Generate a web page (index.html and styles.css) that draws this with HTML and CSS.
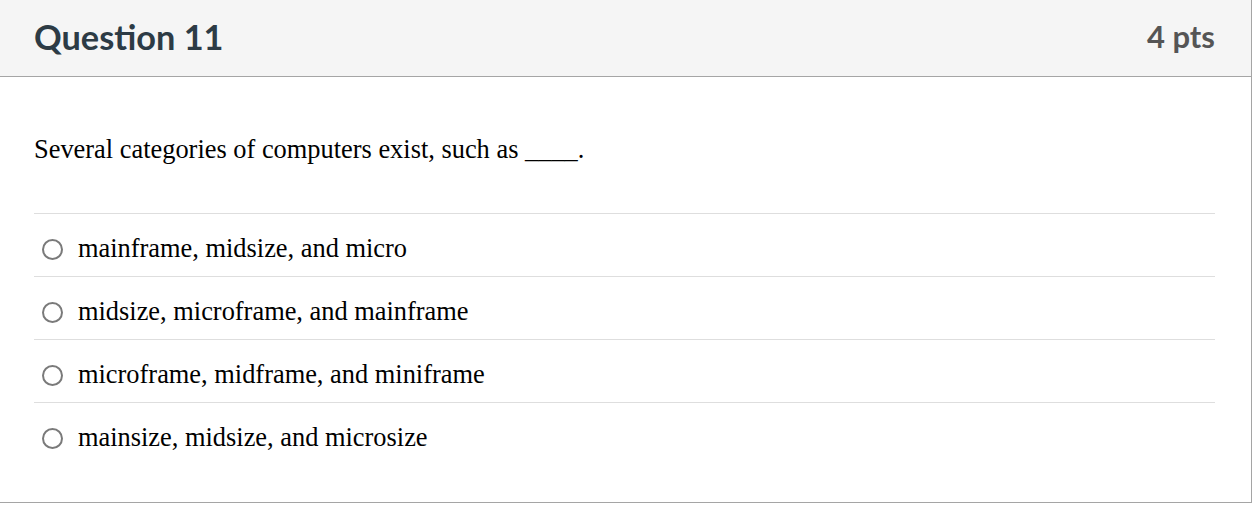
FILE: index.html
```html
<!DOCTYPE html>
<html>
<head>
<meta charset="utf-8">
<link rel="stylesheet" href="styles.css">
</head>
<body>
<div class="card">
  <div class="header">
    <h2 class="title">Question 11</h2>
    <span class="pts">4 pts</span>
  </div>
  <div class="body">
    <p class="question">Several categories of computers exist, such as ____.</p>
    <div class="answers">
      <label class="answer"><span class="radio"></span><span class="atext">mainframe, midsize, and micro</span></label>
      <label class="answer"><span class="radio"></span><span class="atext">midsize, microframe, and mainframe</span></label>
      <label class="answer"><span class="radio"></span><span class="atext">microframe, midframe, and miniframe</span></label>
      <label class="answer"><span class="radio"></span><span class="atext">mainsize, midsize, and microsize</span></label>
    </div>
  </div>
</div>
</body>
</html>
```
FILE: styles.css
```css
html, body { margin: 0; padding: 0; background: #fff; }
.card {
  width: 1251px;
  height: 502px;
  border-right: 1px solid #a5a5a5;
  border-bottom: 1px solid #a5a5a5;
  box-sizing: content-box;
  display: flex;
  flex-direction: column;
}
.header {
  height: 77px;
  flex: none;
  background: #f5f5f5;
  border-bottom: 1px solid #a5a5a5;
  display: flex;
  align-items: center;
  justify-content: space-between;
  padding: 0 36px 4px 34px;
  box-sizing: border-box;
  font-family: Lato, "Open Sans", sans-serif;
}
.title {
  margin: 0;
  font-size: 34.3px;
  font-weight: 700;
  color: #2d3b45;
}
.pts {
  font-size: 31px;
  font-weight: 700;
  color: #555555;
}
.body {
  padding: 0 36px 0 34px;
  font-family: "Liberation Serif", "Times New Roman", serif;
  color: #000;
}
.question {
  margin: 0;
  height: 136px;
  box-sizing: border-box;
  padding-top: 8px;
  display: flex;
  align-items: center;
  font-size: 26.4px;
}
.answers { border-top: 1px solid #dedede; }
.answer {
  display: flex;
  align-items: center;
  height: 63px;
  box-sizing: border-box;
  padding-top: 6px;
  border-bottom: 1px solid #dedede;
  padding-left: 8px;
  font-size: 26.4px;
}
.answer:last-child { border-bottom: none; }
.radio {
  width: 21px;
  height: 21px;
  border: 2px solid #7a7a7a;
  border-radius: 50%;
  box-sizing: border-box;
  margin-right: 15px;
  margin-top: 2px;
  flex: none;
}
```
